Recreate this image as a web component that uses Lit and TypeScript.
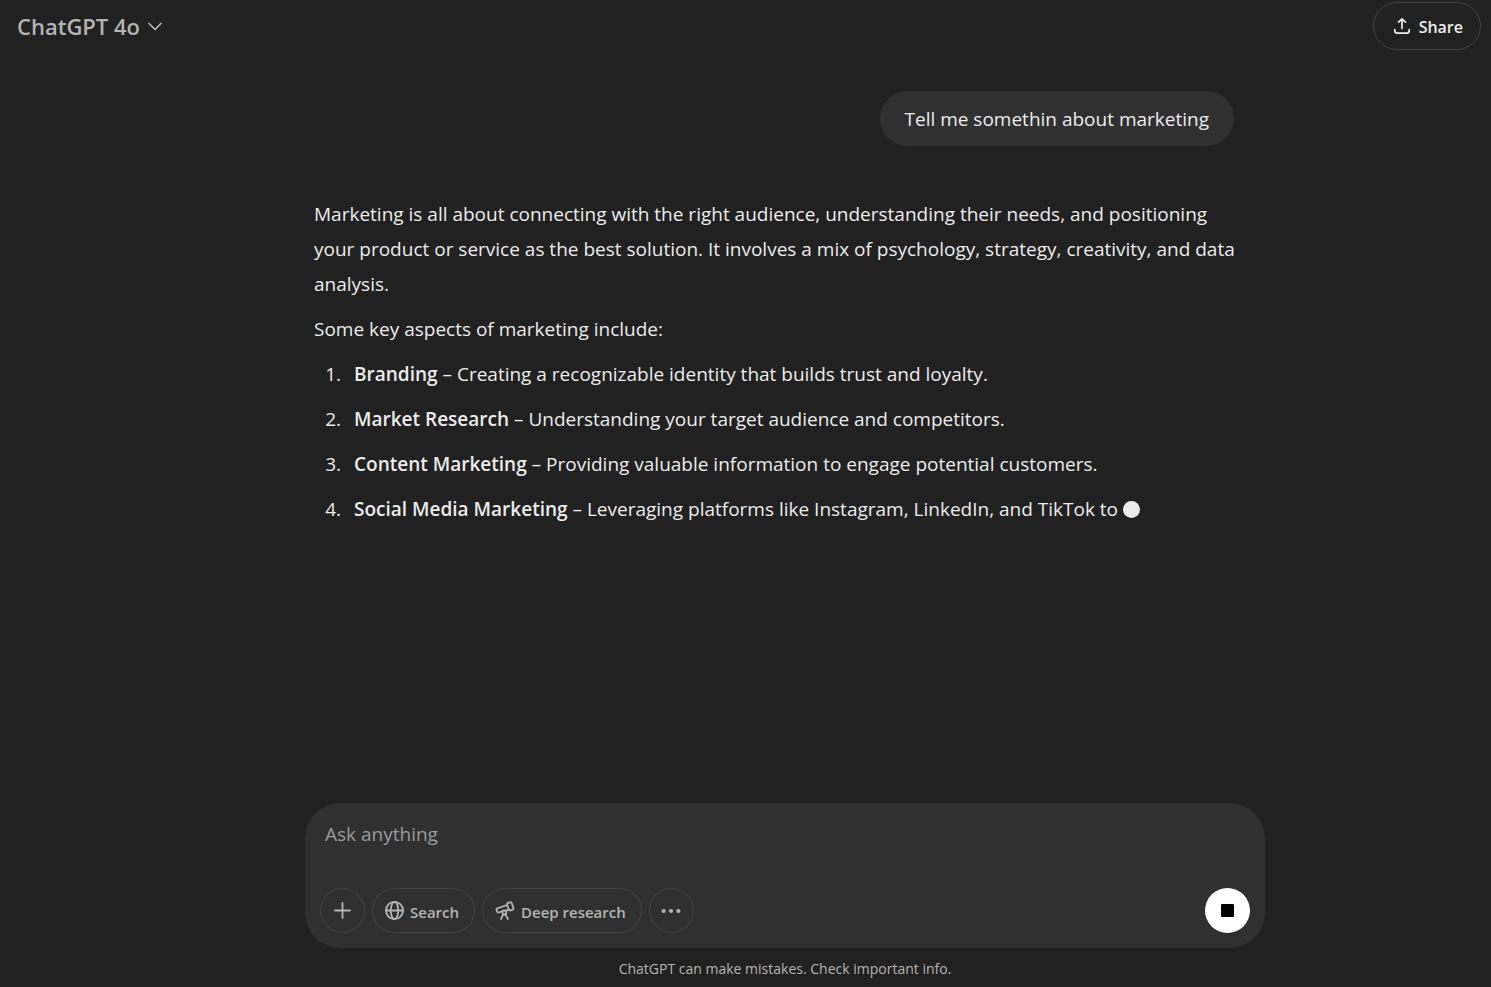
import { LitElement, html, css } from "lit";
import { customElement, state } from "lit/decorators.js";

interface Aspect {
  name: string;
  detail: string;
  streaming?: boolean;
}

const ASPECTS: Aspect[] = [
  { name: "Branding", detail: "Creating a recognizable identity that builds trust and loyalty." },
  { name: "Market Research", detail: "Understanding your target audience and competitors." },
  { name: "Content Marketing", detail: "Providing valuable information to engage potential customers." },
  {
    name: "Social Media Marketing",
    detail: "Leveraging platforms like Instagram, LinkedIn, and TikTok to",
    streaming: true,
  },
];

@customElement("app-root")
export class AppRoot extends LitElement {
  @state() private draft = "";

  static styles = css`
    :host {
      display: flex;
      flex-direction: column;
      min-height: 100vh;
      box-sizing: border-box;
      background: #212121;
      color: #ececec;
      font-family: "Segoe UI", "Open Sans", "Noto Sans", sans-serif;
      font-size: 19px;
      line-height: 35px;
    }
    * {
      box-sizing: border-box;
    }
    button,
    textarea {
      font: inherit;
      color: inherit;
      background: none;
      border: 0;
      margin: 0;
      padding: 0;
    }
    button {
      cursor: pointer;
    }
    svg {
      display: block;
      flex: none;
      fill: none;
      stroke: currentColor;
      stroke-linecap: round;
      stroke-linejoin: round;
    }
    header {
      display: flex;
      justify-content: space-between;
      align-items: center;
      padding: 2px 10px 0 17px;
    }
    .model {
      display: flex;
      align-items: center;
      gap: 7px;
      color: #b4b4b4;
      font-size: 22px;
      font-weight: 600;
    }
    .share {
      display: flex;
      align-items: center;
      gap: 8px;
      height: 48px;
      padding: 0 17px 0 19px;
      border: 1px solid #424242;
      border-radius: 24px;
      font-size: 16px;
      font-weight: 600;
    }
    .share span,
    .tool span {
      padding-top: 3px;
    }
    main {
      flex: 1;
      padding: 41px 0 20px 79px;
    }
    .thread {
      max-width: 960px;
      margin: 0 auto;
      padding: 0 23px 0 9px;
    }
    .bubble {
      width: fit-content;
      margin: 0 8px 51px auto;
      padding: 11px 25px 9px;
      border-radius: 28px;
      background: #303030;
    }
    p {
      margin: 0 0 10px;
    }
    ol {
      margin: 0;
      padding: 0 0 0 32px;
    }
    li {
      margin-bottom: 10px;
      padding: 0 0 0 8px;
    }
    strong {
      font-weight: 600;
    }
    .cursor {
      display: inline-block;
      width: 17px;
      height: 17px;
      border-radius: 50%;
      background: #ececec;
      vertical-align: -2px;
    }
    footer {
      padding: 0 0 7px 79px;
    }
    .composer {
      max-width: 960px;
      margin: 0 auto;
      padding: 14px 15px 15px;
      border-radius: 35px;
      background: #303030;
      color: #b4b4b4;
    }
    textarea {
      display: block;
      width: 100%;
      height: 71px;
      padding: 0 5px;
      resize: none;
      outline: none;
      color: #ececec;
    }
    textarea::placeholder {
      color: #9b9b9b;
      opacity: 1;
    }
    .tools {
      display: flex;
      gap: 7px;
    }
    .tool {
      display: flex;
      align-items: center;
      justify-content: center;
      gap: 6px;
      min-width: 45px;
      height: 45px;
      border: 1px solid #454545;
      border-radius: 23px;
      font-size: 15px;
      font-weight: 600;
    }
    .wide {
      padding: 0 15px 0 12px;
    }
    .stop {
      display: flex;
      align-items: center;
      justify-content: center;
      width: 45px;
      height: 45px;
      margin-left: auto;
      border-radius: 50%;
      background: #fff;
    }
    .square {
      width: 13px;
      height: 13px;
      border-radius: 1px;
      background: #000;
    }
    .note {
      margin: 9px 0 0;
      color: #b4b4b4;
      font-size: 14px;
      line-height: 23px;
      text-align: center;
    }
  `;

  private onInput(event: Event) {
    this.draft = (event.target as HTMLTextAreaElement).value;
  }

  render() {
    return html`
      <header>
        <button class="model" type="button">
          <span>ChatGPT 4o</span>
          <svg width="16" height="16" viewBox="0 0 16 16" stroke-width="1.7">
            <path d="M2 5.5l6 6 6-6" />
          </svg>
        </button>
        <button class="share" type="button">
          <svg width="18" height="18" viewBox="0 0 18 18" stroke-width="1.7">
            <path d="M9 11.5V2M5.6 5.2L9 1.8l3.4 3.4M1.8 12.5v1.3a2.3 2.3 0 0 0 2.3 2.3h9.8a2.3 2.3 0 0 0 2.3-2.3v-1.3" />
          </svg>
          <span>Share</span>
        </button>
      </header>

      <main>
        <div class="thread">
          <div class="bubble">Tell me somethin about marketing</div>
          <p>
            Marketing is all about connecting with the right audience, understanding their needs, and positioning
            your product or service as the best solution. It involves a mix of psychology, strategy, creativity, and
            data analysis.
          </p>
          <p>Some key aspects of marketing include:</p>
          <ol>
            ${ASPECTS.map(
              (a) => html`<li>
                <strong>${a.name}</strong> – ${a.detail}${a.streaming ? html` <span class="cursor"></span>` : ""}
              </li>`
            )}
          </ol>
        </div>
      </main>

      <footer>
        <div class="composer">
          <textarea
            aria-label="Message"
            placeholder="Ask anything"
            .value=${this.draft}
            @input=${this.onInput}
          ></textarea>
          <div class="tools">
            <button class="tool" type="button" aria-label="Add">
              <svg width="17" height="17" viewBox="0 0 17 17" stroke-width="1.8"><path d="M8.5 .9v15.2M.9 8.5h15.2" /></svg>
            </button>
            <button class="tool wide" type="button">
              <svg width="19" height="19" viewBox="0 0 20 20" stroke-width="1.9">
                <circle cx="10" cy="10" r="9" />
                <ellipse cx="10" cy="10" rx="3.9" ry="9" />
                <path d="M1 10h18" />
              </svg>
              <span>Search</span>
            </button>
            <button class="tool wide" type="button">
              <svg width="20" height="20" viewBox="0 0 20 20" stroke-width="1.8">
                <path d="M12.6 2.2l2.6-.9a1.2 1.2 0 0 1 1.5.7l1.8 5.2a1.2 1.2 0 0 1-.8 1.5l-2.3.7a1.2 1.2 0 0 1-1.5-.8L11.900 3.700a1.200 1.200 0 0 1 .7-1.500z" />
                <path d="M12 4L2.300 7.400a1.200 1.200 0 0 0-.8 1.500l.7 1.900a1.200 1.200 0 0 0 1.500.7L7.600 10.200M13.800 8.600L10.600 9.800" />
                <circle cx="9.300" cy="11.500" r="2" />
                <path d="M8.200 13.300L6 18M10.400 13.300l2.500 4.700" />
              </svg>
              <span>Deep research</span>
            </button>
            <button class="tool" type="button" aria-label="More tools">
              <svg width="20" height="20" viewBox="0 0 20 20">
                <g fill="currentColor" stroke="none">
                  <circle cx="2.6" cy="10" r="2.1" />
                  <circle cx="10" cy="10" r="2.1" />
                  <circle cx="17.4" cy="10" r="2.1" />
                </g>
              </svg>
            </button>
            <button class="stop" type="button" aria-label="Stop generating"><span class="square"></span></button>
          </div>
        </div>
        <p class="note">ChatGPT can make mistakes. Check important info.</p>
      </footer>
    `;
  }
}
